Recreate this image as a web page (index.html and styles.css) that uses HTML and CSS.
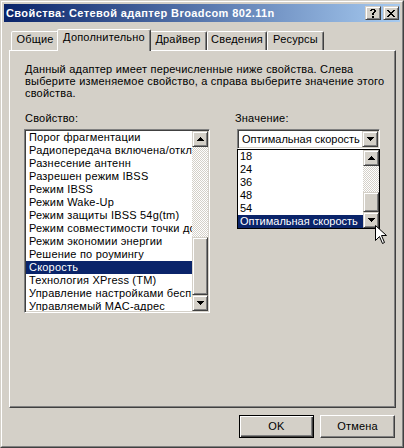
FILE: index.html
```html
<!DOCTYPE html>
<html>
<head>
<meta charset="utf-8">
<title>Свойства</title>
<link rel="stylesheet" href="styles.css">
</head>
<body>
<div class="window">
  <div class="window-inner">
    <div class="titlebar">
      <span class="title">Свойства: Сетевой адаптер Broadcom 802.11n</span>
      <div class="cap-buttons">
        <span class="cap-btn">
          <svg width="6" height="9" viewBox="0 0 6 9" shape-rendering="crispEdges"><path d="M1 0h4v1H1zM0 1h2v1H0zM4 1h2v1H4zM4 2h2v1H4zM3 3h2v1H3zM2 4h2v1H2zM2 5h2v1H2zM2 7h2v2H2z" fill="#000"/></svg>
        </span>
        <span class="cap-btn">
          <svg width="8" height="7" viewBox="0 0 8 7" shape-rendering="crispEdges"><path d="M0 0h2v1H0zM6 0h2v1H6zM1 1h2v1H1zM5 1h2v1H5zM2 2h4v1H2zM3 3h2v1H3zM2 4h4v1H2zM1 5h2v1H1zM5 5h2v1H5zM0 6h2v1H0zM6 6h2v1H6z" fill="#000"/></svg>
        </span>
      </div>
    </div>

    <div class="tabs">
      <div class="tab t-general">Общие</div>
      <div class="tab t-advanced selected">Дополнительно</div>
      <div class="tab t-driver">Драйвер</div>
      <div class="tab t-details">Сведения</div>
      <div class="tab t-resources">Ресурсы</div>
    </div>

    <div class="panel">
      <p class="desc">Данный адаптер имеет перечисленные ниже свойства. Слева<br>выберите изменяемое свойство, а справа выберите значение этого<br>свойства.</p>
      <div class="columns">
        <div class="col-left">
          <div class="label">Свойство:</div>
          <div class="listbox">
            <ul class="items">
              <li>Порог фрагментации</li>
              <li>Радиопередача включена/отключена</li>
              <li>Разнесение антенн</li>
              <li>Разрешен режим IBSS</li>
              <li>Режим IBSS</li>
              <li>Режим Wake-Up</li>
              <li>Режим защиты IBSS 54g(tm)</li>
              <li>Режим совместимости точки доступа</li>
              <li>Режим экономии энергии</li>
              <li>Решение по роумингу</li>
              <li class="sel">Скорость</li>
              <li>Технология XPress (TM)</li>
              <li>Управление настройками беспроводной сети</li>
              <li>Управляемый MAC-адрес</li>
            </ul>
            <div class="scrollbar">
              <div class="sb-btn"><svg width="7" height="4" viewBox="0 0 7 4" shape-rendering="crispEdges"><path d="M3 0h1v1H3zM2 1h3v1H2zM1 2h5v1H1zM0 3h7v1H0z" fill="#000"/></svg></div>
              <div class="sb-track"></div>
              <div class="sb-thumb main-thumb"></div>
              <div class="sb-btn"><svg width="7" height="4" viewBox="0 0 7 4" shape-rendering="crispEdges"><path d="M0 0h7v1H0zM1 1h5v1H1zM2 2h3v1H2zM3 3h1v1H3z" fill="#000"/></svg></div>
            </div>
          </div>
        </div>
        <div class="col-right">
          <div class="label">Значение:</div>
          <div class="combo">
            <span class="combo-text">Оптимальная скорость</span>
            <span class="combo-btn"><svg width="7" height="4" viewBox="0 0 7 4" shape-rendering="crispEdges"><path d="M0 0h7v1H0zM1 1h5v1H1zM2 2h3v1H2zM3 3h1v1H3z" fill="#000"/></svg></span>
          </div>
          <div class="dropdown">
            <ul class="items drop-items">
              <li>18</li>
              <li>24</li>
              <li>36</li>
              <li>48</li>
              <li>54</li>
              <li class="sel">Оптимальная скорость</li>
            </ul>
            <div class="scrollbar">
              <div class="sb-btn"><svg width="7" height="4" viewBox="0 0 7 4" shape-rendering="crispEdges"><path d="M3 0h1v1H3zM2 1h3v1H2zM1 2h5v1H1zM0 3h7v1H0z" fill="#000"/></svg></div>
              <div class="sb-track"></div>
              <div class="sb-thumb drop-thumb"></div>
              <div class="sb-btn"><svg width="7" height="4" viewBox="0 0 7 4" shape-rendering="crispEdges"><path d="M0 0h7v1H0zM1 1h5v1H1zM2 2h3v1H2zM3 3h1v1H3z" fill="#000"/></svg></div>
            </div>
          </div>
        </div>
      </div>
    </div>

    <div class="buttons">
      <button class="btn default">OK</button>
      <button class="btn">Отмена</button>
    </div>
  </div>
</div>
<svg class="cursor" width="13" height="20" viewBox="0 0 13 20"><path d="M0.5 0.5V15.5L4.5 11.5L7.5 18.5L9.5 17.5L6.5 10.5H11.5Z" fill="#fff" stroke="#000" stroke-width="1"/></svg>
</body>
</html>
```

FILE: styles.css
```css
* { box-sizing: border-box; }
html, body { margin: 0; padding: 0; }
body {
  width: 404px;
  height: 448px;
  background: #d4d0c8;
  font-family: "Liberation Sans", Arial, sans-serif;
  font-size: 11px;
  letter-spacing: 0.2px;
  color: #000;
  position: relative;
  overflow: hidden;
}
.window {
  width: 404px;
  height: 448px;
  border: 1px solid;
  border-color: #d4d0c8 #404040 #404040 #d4d0c8;
  background: #d4d0c8;
}
.window-inner {
  height: 100%;
  border: 1px solid;
  border-color: #fff #808080 #808080 #fff;
  padding: 2px;
  display: flex;
  flex-direction: column;
}
.titlebar {
  height: 18px;
  flex: none;
  display: flex;
  align-items: center;
  background: linear-gradient(to right, #0a246a, #a6caf0);
  padding-left: 2px;
}
.title {
  flex: 1;
  color: #fff;
  font-weight: bold;
  font-size: 11px;
  letter-spacing: 0.4px;
  line-height: 18px;
  white-space: nowrap;
}
.cap-buttons { display: flex; gap: 2px; margin-right: 1px; }
.cap-btn,
.sb-btn,
.sb-thumb,
.combo-btn {
  background: #d4d0c8;
  border: 1px solid;
  border-color: #d4d0c8 #404040 #404040 #d4d0c8;
  box-shadow: inset 1px 1px #fff, inset -1px -1px #808080;
}
.cap-btn {
  width: 16px;
  height: 14px;
  display: flex;
  align-items: center;
  justify-content: center;
}
.cap-btn svg { display: block; }

.tabs {
  flex: none;
  display: flex;
  align-items: flex-end;
  height: 21px;
  margin-top: 7px;
  padding-left: 7px;
}
.tab {
  height: 19px;
  border: 1px solid;
  border-bottom: none;
  border-color: #fff #404040 transparent #fff;
  box-shadow: inset -1px 0 #808080;
  border-radius: 2px 2px 0 0;
  background: #d4d0c8;
  text-align: center;
  padding-top: 1px;
  line-height: 13px;
  white-space: nowrap;
}
.tab.selected {
  height: 22px;
  margin: 0 -2px -1px;
  position: relative;
  z-index: 1;
}
.t-general { width: 48px; }
.t-advanced { width: 94px; }
.t-driver { width: 58px; }
.t-details { width: 60px; }
.t-resources { width: 57px; }

.panel {
  flex: none;
  height: 358px;
  margin: 0 4px 0 5px;
  border: 1px solid;
  border-color: #fff #404040 #404040 #fff;
  box-shadow: inset -1px -1px #808080;
  padding: 12px 0 0 15px;
}
.desc {
  margin: 0;
  height: 36px;
  line-height: 12px;
  white-space: nowrap;
}
.columns {
  display: flex;
  gap: 25px;
  margin-top: 13px;
}
.col-left { width: 185px; }
.col-right { width: 145px; }
.label {
  height: 13px;
  line-height: 13px;
  margin-bottom: 4px;
  white-space: nowrap;
}
.listbox {
  width: 186px;
  height: 184px;
  margin-left: -1px;
  border: 1px solid;
  border-color: #808080 #fff #fff #808080;
  box-shadow: inset 1px 1px #404040, inset -1px -1px #d4d0c8;
  padding: 1px;
  background: #fff;
  display: flex;
}
.items {
  list-style: none;
  margin: 0;
  padding: 0;
  width: 166px;
  flex: none;
  overflow: hidden;
}
.items li {
  height: 13px;
  line-height: 13px;
  padding-left: 3px;
  white-space: nowrap;
  overflow: hidden;
}
.items li.sel { background: #0a246a; color: #fff; }

.scrollbar {
  width: 16px;
  flex: none;
  display: flex;
  flex-direction: column;
}
.sb-btn {
  height: 16px;
  flex: none;
  display: flex;
  align-items: center;
  justify-content: center;
}
.sb-btn svg, .combo-btn svg { display: block; }
.sb-track {
  flex: 1;
  background: repeating-conic-gradient(#d4d0c8 0 25%, #fff 0 50%) 0 0 / 2px 2px;
}
.sb-thumb { flex: none; }
.main-thumb { height: 58px; }
.drop-thumb { height: 20px; }

.combo {
  width: 143px;
  height: 20px;
  margin-left: 2px;
  border: 1px solid;
  border-color: #808080 #fff #fff #808080;
  box-shadow: inset 1px 1px #404040, inset -1px -1px #d4d0c8;
  padding: 1px;
  background: #fff;
  display: flex;
}
.combo-text {
  flex: 1;
  padding-left: 3px;
  line-height: 16px;
  letter-spacing: 0;
  white-space: nowrap;
  overflow: hidden;
}
.combo-btn {
  width: 16px;
  height: 16px;
  flex: none;
  display: flex;
  align-items: center;
  justify-content: center;
}
.dropdown {
  width: 143px;
  height: 80px;
  margin-left: 2px;
  border: 1px solid #000;
  background: #fff;
  display: flex;
}
.drop-items { width: 125px; letter-spacing: 0; }
.drop-items li { padding-left: 2px; }

.buttons {
  flex: none;
  display: flex;
  justify-content: flex-end;
  gap: 6px;
  margin-top: 7px;
  padding-right: 5px;
}
.btn {
  width: 75px;
  height: 23px;
  padding: 0;
  margin: 0;
  font: inherit;
  font-weight: normal;
  letter-spacing: 0.2px;
  color: #000;
  background: #d4d0c8;
  border: 1px solid;
  border-color: #fff #404040 #404040 #fff;
  box-shadow: inset -1px -1px #808080;
  border-radius: 0;
  text-align: center;
  line-height: 21px;
}
.btn.default {
  border-color: #000;
  box-shadow: inset 1px 1px #fff, inset -1px -1px #404040, inset -2px -2px #808080;
}
.cursor {
  position: absolute;
  left: 375px;
  top: 225px;
  display: block;
}
```
